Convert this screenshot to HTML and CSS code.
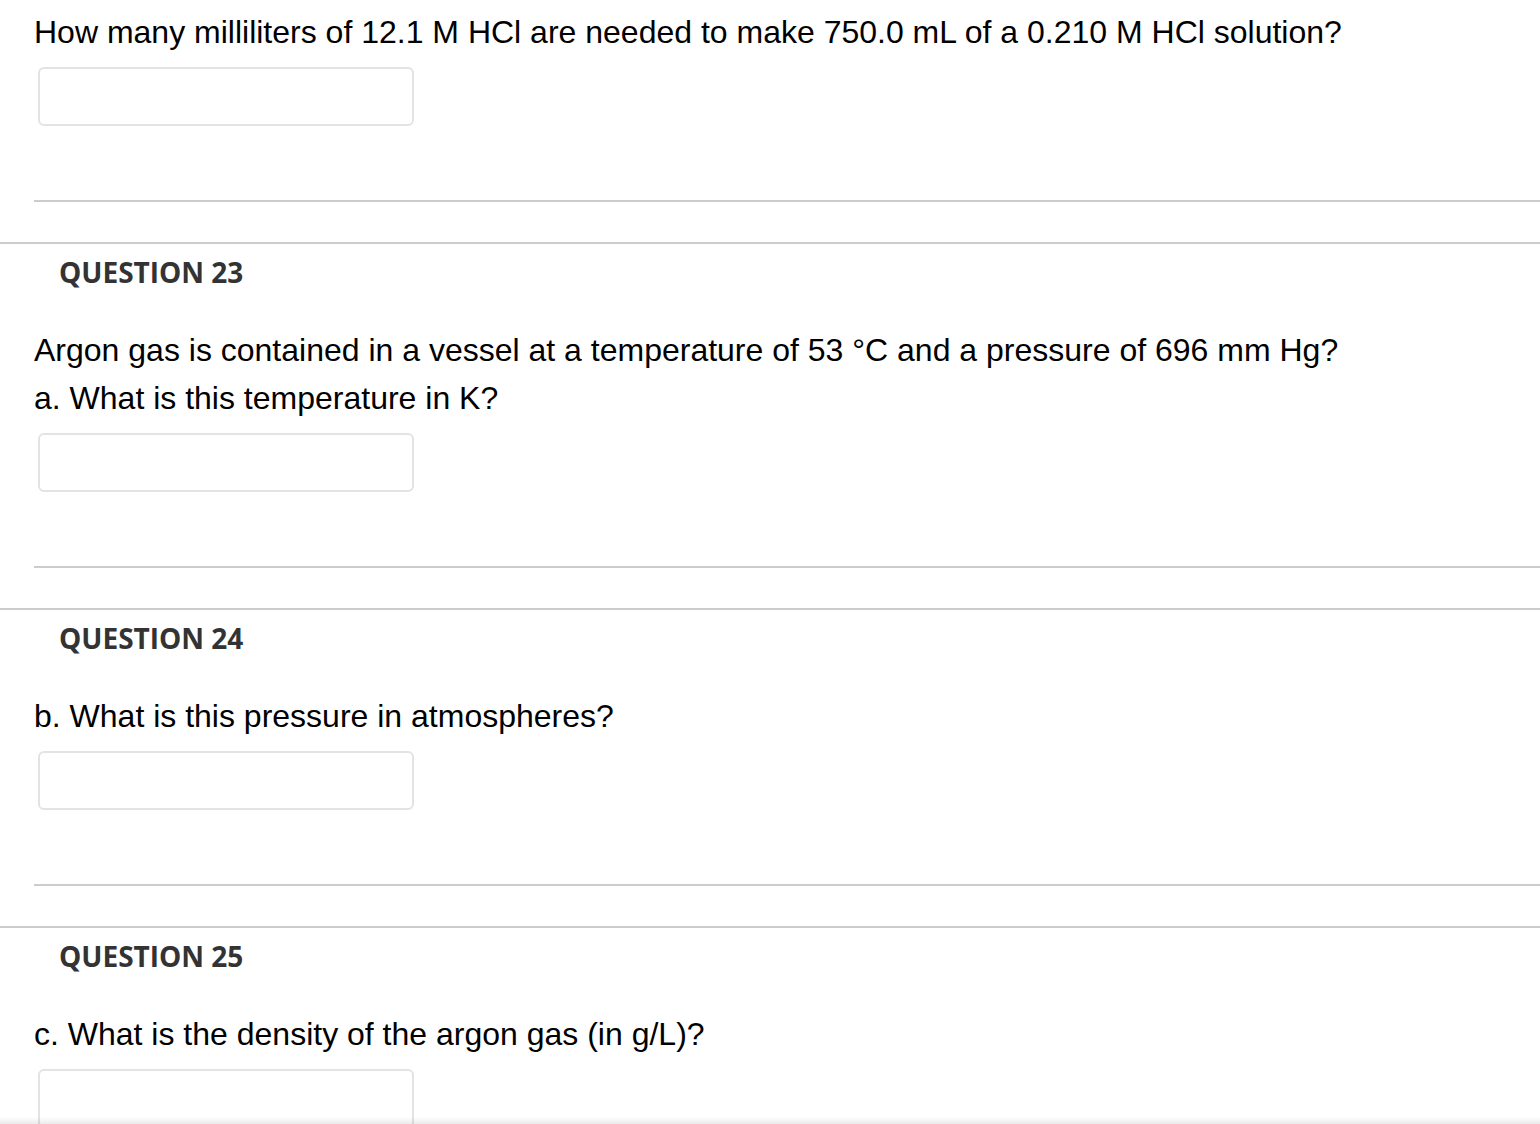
FILE: index.html
```html
<!DOCTYPE html>
<html lang="en">
<head>
<meta charset="utf-8">
<title>Quiz</title>
<link rel="stylesheet" href="styles.css">
</head>
<body>
<div class="page">
  <section class="question first">
    <div class="q-body">
      <p class="q-text">How many milliliters of 12.1 M HCl are needed to make 750.0 mL of a 0.210 M HCl solution?</p>
      <input class="answer" type="text" aria-label="answer">
    </div>
  </section>

  <section class="question">
    <h2 class="q-title">QUESTION 23</h2>
    <div class="q-body">
      <p class="q-text">Argon gas is contained in a vessel at a temperature of 53 °C and a pressure of 696 mm Hg?<br>a. What is this temperature in K?</p>
      <input class="answer" type="text" aria-label="answer">
    </div>
  </section>

  <section class="question">
    <h2 class="q-title">QUESTION 24</h2>
    <div class="q-body">
      <p class="q-text">b. What is this pressure in atmospheres?</p>
      <input class="answer" type="text" aria-label="answer">
    </div>
  </section>

  <section class="question">
    <h2 class="q-title">QUESTION 25</h2>
    <div class="q-body">
      <p class="q-text">c. What is the density of the argon gas (in g/L)?</p>
      <input class="answer" type="text" aria-label="answer">
    </div>
  </section>
</div>
<div class="bottom-shade"></div>
</body>
</html>
```

FILE: styles.css
```css
html, body {
  margin: 0;
  padding: 0;
  background: #ffffff;
}

body {
  font-family: "Liberation Sans", Arial, sans-serif;
  color: #000000;
  height: 1124px;
  overflow: hidden;
  position: relative;
}

.page {
  padding-top: 8px;
}

.question {
  border-top: 2px solid #cccccc;
  margin-top: 40px;
}

.question.first {
  border-top: none;
  margin-top: 0;
}

.q-title {
  margin: 0;
  padding: 8px 0 0 59px;
  font-family: "Open Sans", sans-serif;
  font-weight: 700;
  font-size: 28px;
  line-height: 40px;
  color: #333333;
}

.question .q-title + .q-body {
  margin-top: 34px;
}

.q-body {
  margin-left: 34px;
  border-bottom: 2px solid #cccccc;
  padding-bottom: 74px;
}

.q-text {
  margin: 0;
  font-size: 32px;
  line-height: 48px;
}

.answer {
  display: block;
  box-sizing: border-box;
  margin: 11px 0 0 4px;
  width: 376px;
  height: 59px;
  border: 2px solid #e3e3e3;
  border-radius: 6px;
  background: #ffffff;
  padding: 0 10px;
  font-size: 20px;
}

.bottom-shade {
  position: absolute;
  left: 0;
  right: 0;
  bottom: 0;
  height: 7px;
  background: linear-gradient(to bottom, rgba(0,0,0,0), rgba(0,0,0,0.08));
}
```
